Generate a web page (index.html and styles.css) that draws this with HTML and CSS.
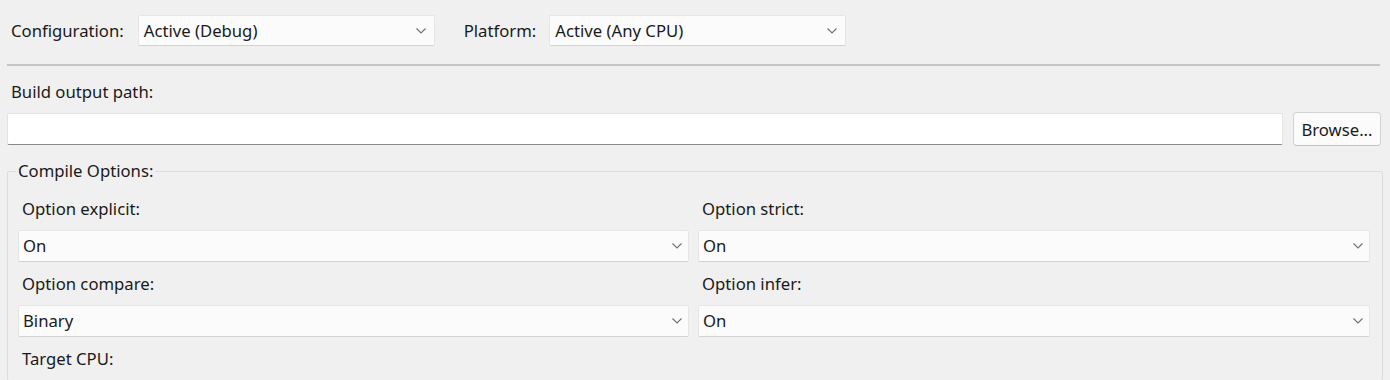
FILE: index.html
```html
<!DOCTYPE html>
<html lang="en">
<head>
  <meta charset="UTF-8" />
  <title>Compile</title>
  <link rel="stylesheet" href="styles.css">
</head>
<body>
  <div class="page">
    <div class="config-row">
      <span class="config-label">Configuration:</span>
      <div class="combo combo-top">
        <span class="combo-text">Active (Debug)</span>
        <svg class="chevron" width="10" height="6" viewBox="0 0 10 6"><path d="M0.5 0.5 L5 5 L9.5 0.5" /></svg>
      </div>
      <span class="config-label platform-label">Platform:</span>
      <div class="combo combo-top">
        <span class="combo-text">Active (Any CPU)</span>
        <svg class="chevron" width="10" height="6" viewBox="0 0 10 6"><path d="M0.5 0.5 L5 5 L9.5 0.5" /></svg>
      </div>
    </div>

    <div class="separator"></div>

    <div class="field-label">Build output path:</div>
    <div class="path-row">
      <div class="text-input"></div>
      <button class="browse-btn">Browse...</button>
    </div>

    <fieldset class="group">
      <legend>Compile Options:</legend>
      <div class="options-grid">
        <div class="option">
          <div class="option-label">Option explicit:</div>
          <div class="combo">
            <span class="combo-text">On</span>
            <svg class="chevron" width="10" height="6" viewBox="0 0 10 6"><path d="M0.5 0.5 L5 5 L9.5 0.5" /></svg>
          </div>
        </div>
        <div class="option">
          <div class="option-label">Option strict:</div>
          <div class="combo">
            <span class="combo-text">On</span>
            <svg class="chevron" width="10" height="6" viewBox="0 0 10 6"><path d="M0.5 0.5 L5 5 L9.5 0.5" /></svg>
          </div>
        </div>
        <div class="option">
          <div class="option-label">Option compare:</div>
          <div class="combo">
            <span class="combo-text">Binary</span>
            <svg class="chevron" width="10" height="6" viewBox="0 0 10 6"><path d="M0.5 0.5 L5 5 L9.5 0.5" /></svg>
          </div>
        </div>
        <div class="option">
          <div class="option-label">Option infer:</div>
          <div class="combo">
            <span class="combo-text">On</span>
            <svg class="chevron" width="10" height="6" viewBox="0 0 10 6"><path d="M0.5 0.5 L5 5 L9.5 0.5" /></svg>
          </div>
        </div>
        <div class="option">
          <div class="option-label">Target CPU:</div>
        </div>
      </div>
    </fieldset>
  </div>
</body>
</html>
```

FILE: styles.css
```css
* {
  box-sizing: border-box;
}

html, body {
  margin: 0;
  padding: 0;
  height: 100%;
  overflow: hidden;
  background: #f0f0f0;
  color: #1a1a1a;
  font-family: "Noto Sans", "Open Sans", sans-serif;
  font-size: 16.7px;
}

.page {
  padding: 0 7px 0 7px;
}

/* top configuration bar */
.config-row {
  display: flex;
  align-items: center;
  padding: 15px 0 0 4px;
}

.config-label {
  margin-right: 14px;
  line-height: 20px;
}

.platform-label {
  margin-left: 29px;
  margin-right: 13px;
}

.combo {
  position: relative;
  display: flex;
  align-items: center;
  justify-content: space-between;
  height: 32px;
  padding: 0 6px 0 4px;
  background: #fbfbfb;
  border: 1px solid #e6e6e6;
  border-bottom-color: #d2d2d2;
  border-radius: 2px;
}

.combo-top {
  width: 297px;
  height: 31px;
  padding: 0 8px 0 5px;
}

.combo-text {
  line-height: 20px;
}

.chevron {
  fill: none;
  stroke: #707070;
  stroke-width: 1.1;
}

.separator {
  height: 2px;
  background: #c6c6c6;
  margin: 18px 3px 0 0;
}

/* build output path */
.field-label {
  line-height: 20px;
  padding-left: 4px;
  margin-top: 16px;
}

.path-row {
  display: flex;
  align-items: center;
  gap: 10px;
  margin-top: 10px;
  padding-right: 2px;
}

.text-input {
  flex: 1;
  height: 32px;
  background: #ffffff;
  border: 1px solid #e4e4e4;
  border-bottom: 1px solid #8a8a8a;
  border-radius: 2px;
}

.browse-btn {
  width: 88px;
  height: 34px;
  font: inherit;
  color: #1a1a1a;
  background: #fbfbfb;
  border: 1px solid #d3d3d3;
  border-bottom-color: #c4c4c4;
  border-radius: 4px;
  padding: 0;
}

/* compile options group */
.group {
  margin: 15px 0 0 0;
  padding: 6px 11px 0 10px;
  border: 1px solid #dcdcdc;
  border-radius: 2px;
  width: 1376px;
}

.group legend {
  padding: 0 2px;
  margin-left: -2px;
  line-height: 20px;
}

.options-grid {
  display: grid;
  grid-template-columns: 671px 672px;
  column-gap: 9px;
}

.option-label {
  line-height: 20px;
  padding: 12px 0 11px 4px;
}
```
